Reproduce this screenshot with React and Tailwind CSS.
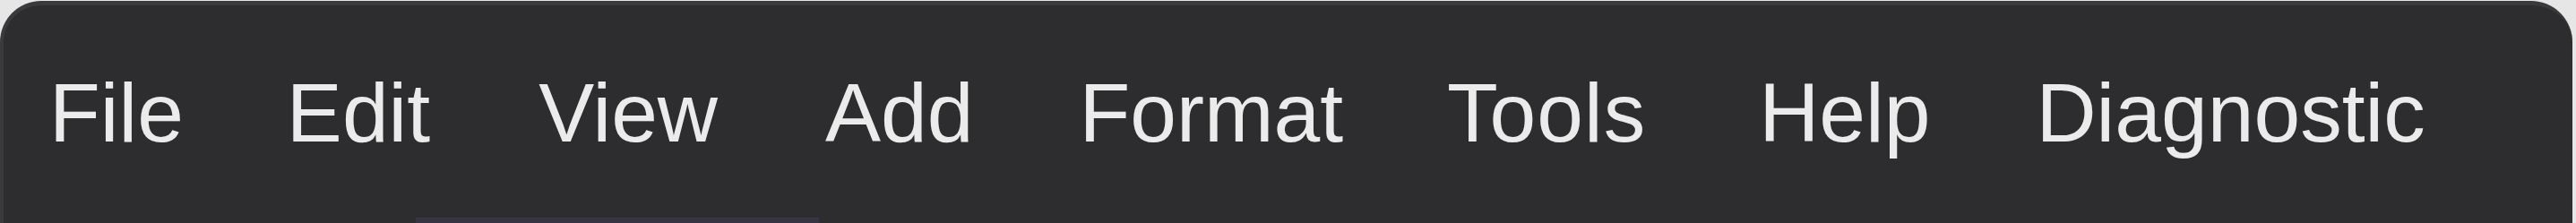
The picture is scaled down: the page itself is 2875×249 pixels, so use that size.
const items = [
  { label: "File", cls: "" },
  { label: "Edit", cls: "ml-[-3px]" },
  { label: "View", cls: "ml-[3px]" },
  { label: "Add", cls: "ml-[2px]" },
  { label: "Format", cls: "" },
  { label: "Tools", cls: "ml-[-2px] tracking-[1px]" },
  { label: "Help", cls: "ml-[8px]" },
  { label: "Diagnostic", cls: "" },
];

export default function App() {
  return (
    <div className="w-full h-[249px] bg-[#e6e6e6] pt-px pr-[4px] overflow-hidden">
      <div className="h-full flex flex-col rounded-t-[46px] bg-[#2d2d2f] border-t-[5px] border-l-[4px] border-[#3a3a3c]">
        <nav className="flex gap-[118px] pl-[51px] pt-[74px] text-[93px] leading-none text-[#ebebeb] font-['Liberation_Sans',Arial,sans-serif]">
          {items.map((it) => (
            <span key={it.label} className={it.cls}>
              {it.label}
            </span>
          ))}
        </nav>
        <div className="mt-auto ml-[460px] w-[450px] h-[6px] bg-[#363345] border-t border-[#3b3848]" />
      </div>
    </div>
  );
}
